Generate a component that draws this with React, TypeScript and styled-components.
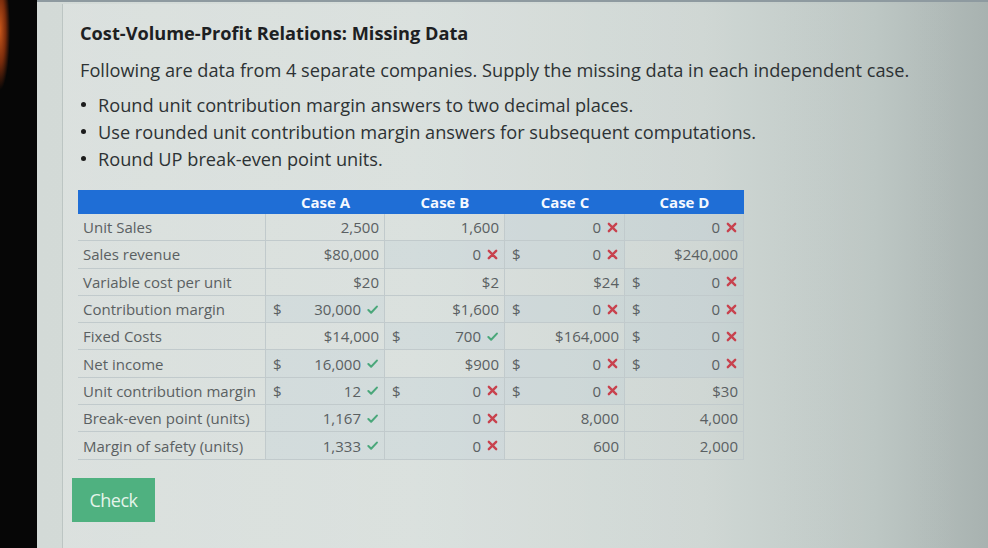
import React from "react";
import styled, { createGlobalStyle } from "styled-components";

const Global = createGlobalStyle`
  html, body { margin: 0; padding: 0; background: #050505; }
  body { width: 988px; height: 548px; overflow: hidden; font-family: "Open Sans", "Noto Sans", sans-serif; }
  * { box-sizing: border-box; }
`;

const Frame = styled.div`
  display: flex;
  width: 988px;
  height: 548px;
`;

const Bezel = styled.div`
  width: 37px;
  flex: none;
  background:
    radial-gradient(ellipse 10px 60px at 0px 30px, #c8561a 0%, #7a2c0c 55%, rgba(0,0,0,0) 100%),
    #060606;
`;

const Screen = styled.div`
  flex: 1;
  display: flex;
  padding: 2px 0 0 25px;
  background: linear-gradient(90deg, #d3dad7 0%, #d6ddda 40%, #cdd5d2 70%, #bcc6c3 88%, #a8b2b0 100%);
  border-top: 2px solid #8e9aa0;
`;

const Card = styled.div`
  flex: 1;
  border-left: 1px solid #bcc5c3;
  background: linear-gradient(90deg, rgba(255,255,255,0.18), rgba(255,255,255,0.05) 70%, rgba(255,255,255,0));
  padding: 17px 0 0 15px;
  display: flex;
  flex-direction: column;
`;

const Title = styled.h1`
  margin: 0 0 0 2px;
  font-size: 18.2px;
  line-height: 24px;
  font-weight: 700;
  color: #1d2022;
`;

const Intro = styled.p`
  margin: 13px 0 0 2px;
  font-size: 18.2px;
  line-height: 24px;
  color: #2d3234;
  white-space: nowrap;
`;

const Bullets = styled.ul`
  margin: 9px 0 0 2px;
  padding: 0;
  list-style: none;
  display: flex;
  flex-direction: column;
`;

const Bullet = styled.li`
  display: flex;
  align-items: center;
  gap: 12px;
  height: 27px;
  font-size: 18.2px;
  color: #2d3234;
  white-space: nowrap;
  &::before {
    content: "";
    width: 5px;
    height: 5px;
    margin-left: 1px;
    border-radius: 50%;
    background: #1c1c1c;
    flex: none;
  }
`;

const Table = styled.div`
  margin-top: 18px;
  width: 666px;
  display: grid;
  grid-template-columns: 188px 119px 120px 120px 119px;
  font-size: 15px;
  color: #5a6062;
`;

const HeadCell = styled.div`
  height: 24px;
  background: #1f6ed6;
  color: #f4f8ff;
  font-weight: 700;
  font-size: 15px;
  display: flex;
  align-items: center;
  justify-content: center;
`;

const Label = styled.div`
  height: 27.3px;
  border-bottom: 1px solid #c1cacc;
  border-right: 1px solid #c1cacc;
  padding-left: 5px;
  display: flex;
  align-items: center;
  white-space: nowrap;
`;

const Cell = styled.div<{ $input?: boolean }>`
  height: 27.3px;
  border-bottom: 1px solid #c1cacc;
  border-right: 1px solid #c1cacc;
  display: flex;
  align-items: center;
  white-space: nowrap;
  padding: 0 ${(p) => (p.$input ? 6 : 5)}px 0 7px;
  background: ${(p) => (p.$input ? "rgba(160,188,214,0.14)" : "transparent")};
`;

const Dollar = styled.span`
  width: 14px;
`;

const Value = styled.span`
  margin-left: auto;
  display: flex;
  align-items: center;
  gap: 6px;
`;

const Mark = styled.svg`
  width: 11px;
  height: 11px;
  flex: none;
`;

const CheckButton = styled.button`
  margin: 18px 0 0 -6px;
  width: 83px;
  height: 44px;
  border: none;
  background: #4fb180;
  color: #e4f4ea;
  font-family: "Open Sans", sans-serif;
  font-size: 18px;
  letter-spacing: -0.5px;
  padding: 0;
`;

type C = { v: string; d?: boolean; m?: "ok" | "x" };

const rows: { label: string; cells: C[] }[] = [
  { label: "Unit Sales", cells: [{ v: "2,500" }, { v: "1,600" }, { v: "0", m: "x" }, { v: "0", m: "x" }] },
  { label: "Sales revenue", cells: [{ v: "$80,000" }, { v: "0", m: "x" }, { v: "0", d: true, m: "x" }, { v: "$240,000" }] },
  { label: "Variable cost per unit", cells: [{ v: "$20" }, { v: "$2" }, { v: "$24" }, { v: "0", d: true, m: "x" }] },
  { label: "Contribution margin", cells: [{ v: "30,000", d: true, m: "ok" }, { v: "$1,600" }, { v: "0", d: true, m: "x" }, { v: "0", d: true, m: "x" }] },
  { label: "Fixed Costs", cells: [{ v: "$14,000" }, { v: "700", d: true, m: "ok" }, { v: "$164,000" }, { v: "0", d: true, m: "x" }] },
  { label: "Net income", cells: [{ v: "16,000", d: true, m: "ok" }, { v: "$900" }, { v: "0", d: true, m: "x" }, { v: "0", d: true, m: "x" }] },
  { label: "Unit contribution margin", cells: [{ v: "12", d: true, m: "ok" }, { v: "0", d: true, m: "x" }, { v: "0", d: true, m: "x" }, { v: "$30" }] },
  { label: "Break-even point (units)", cells: [{ v: "1,167", m: "ok" }, { v: "0", m: "x" }, { v: "8,000" }, { v: "4,000" }] },
  { label: "Margin of safety (units)", cells: [{ v: "1,333", m: "ok" }, { v: "0", m: "x" }, { v: "600" }, { v: "2,000" }] },
];

const Ok = () => (
  <Mark viewBox="0 0 12 12">
    <path d="M1.5 6.5 L4.5 9.5 L10.8 2.8" fill="none" stroke="#4aa77a" strokeWidth="2.2" strokeLinecap="round" strokeLinejoin="round" />
  </Mark>
);

const Bad = () => (
  <Mark viewBox="0 0 12 12">
    <path d="M2 2 L10 10 M10 2 L2 10" fill="none" stroke="#c8424e" strokeWidth="2.6" strokeLinecap="round" />
  </Mark>
);

export default function App() {
  return (
    <Frame>
      <Global />
      <Bezel />
      <Screen>
        <Card>
          <Title>Cost-Volume-Profit Relations: Missing Data</Title>
          <Intro>Following are data from 4 separate companies. Supply the missing data in each independent case.</Intro>
          <Bullets>
            <Bullet>Round unit contribution margin answers to two decimal places.</Bullet>
            <Bullet>Use rounded unit contribution margin answers for subsequent computations.</Bullet>
            <Bullet>Round UP break-even point units.</Bullet>
          </Bullets>
          <Table>
            <HeadCell />
            <HeadCell>Case A</HeadCell>
            <HeadCell>Case B</HeadCell>
            <HeadCell>Case C</HeadCell>
            <HeadCell>Case D</HeadCell>
            {rows.map((r) => (
              <React.Fragment key={r.label}>
                <Label>{r.label}</Label>
                {r.cells.map((c, i) => (
                  <Cell key={i} $input={!!c.m}>
                    {c.d && <Dollar>$</Dollar>}
                    <Value>
                      {c.v}
                      {c.m === "ok" && <Ok />}
                      {c.m === "x" && <Bad />}
                    </Value>
                  </Cell>
                ))}
              </React.Fragment>
            ))}
          </Table>
          <CheckButton>Check</CheckButton>
        </Card>
      </Screen>
    </Frame>
  );
}
